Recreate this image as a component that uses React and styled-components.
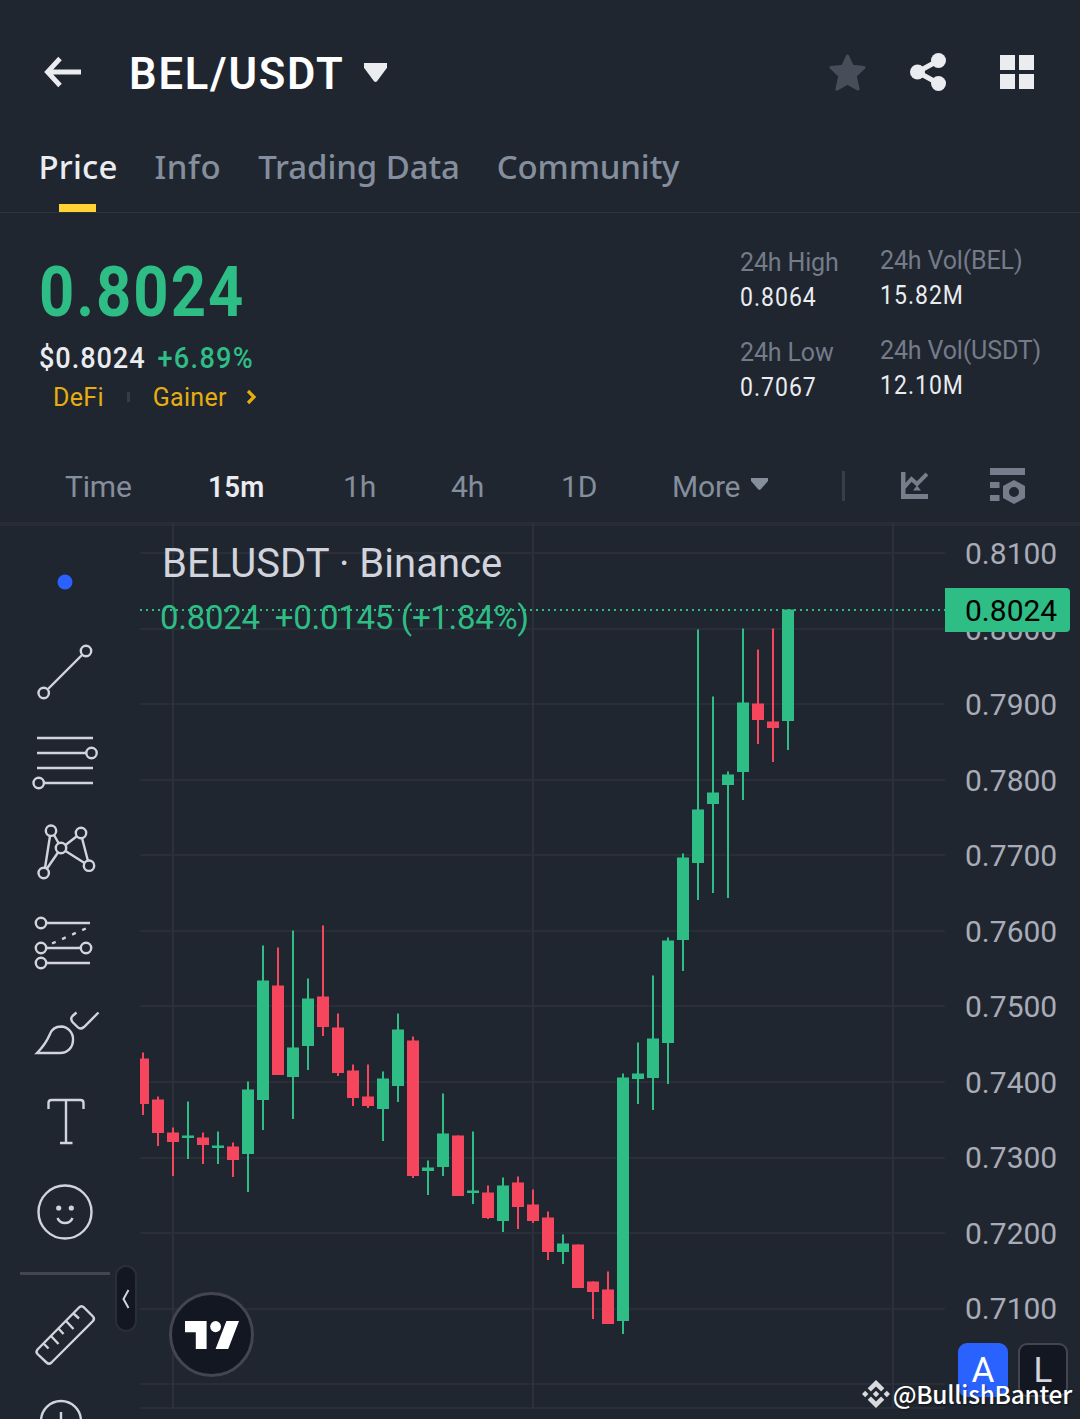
import React from 'react';
import styled, { createGlobalStyle } from 'styled-components';

const GREEN = '#2ebd85';
const RED = '#f6465d';
const LIGHT = '#eaecef';
const MUTED = '#848e9c';
const GOLD = '#e6ae10';

const TABS = [
  { label: 'Price', spacing: 0.2, active: true },
  { label: 'Info', spacing: 0.6 },
  { label: 'Trading Data', spacing: -0.1 },
  { label: 'Community', spacing: -0.15 },
];

const STATS = [
  { label: '24h High', value: '0.8064' },
  { label: '24h Vol(BEL)', value: '15.82M' },
  { label: '24h Low', value: '0.7067' },
  { label: '24h Vol(USDT)', value: '12.10M' },
];

const AXIS = [
  '0.8100',
  '0.8000',
  '0.7900',
  '0.7800',
  '0.7700',
  '0.7600',
  '0.7500',
  '0.7400',
  '0.7300',
  '0.7200',
  '0.7100',
];

// [up, wick top, body top, body bottom, wick bottom], one every 15px
const CANDLES = [
  [0, 1052.5, 1058.5, 1104, 1115],
  [0, 1096.5, 1099.5, 1133, 1146],
  [0, 1127.5, 1132.5, 1142, 1176],
  [1, 1101.5, 1135.5, 1138, 1159],
  [0, 1132.5, 1137.5, 1145, 1164],
  [1, 1131.5, 1145.5, 1148, 1164],
  [0, 1142.5, 1146.5, 1160, 1177],
  [1, 1081.5, 1089.5, 1154, 1192],
  [1, 945.5, 980.5, 1100, 1130],
  [0, 947.5, 985.5, 1075, 1075],
  [1, 930.5, 1047.5, 1077, 1119],
  [1, 978.5, 998.5, 1046, 1070],
  [0, 925.5, 996.5, 1027, 1036],
  [0, 1013.5, 1027.5, 1073, 1076],
  [0, 1064.5, 1070.5, 1098, 1106],
  [0, 1064.5, 1096.5, 1106, 1108],
  [1, 1071.5, 1078.5, 1109, 1141],
  [1, 1013.5, 1029.5, 1086, 1102],
  [0, 1036.5, 1040.5, 1176, 1178],
  [1, 1160.5, 1167.5, 1171, 1195],
  [1, 1093.5, 1133.5, 1167, 1176],
  [0, 1135.5, 1135.5, 1196, 1196],
  [1, 1131.5, 1190.5, 1193, 1204],
  [0, 1185.5, 1192.5, 1218, 1219],
  [1, 1177.5, 1185.5, 1221, 1232],
  [0, 1176.5, 1182.5, 1207, 1229],
  [0, 1189.5, 1204.5, 1221, 1223],
  [0, 1211.5, 1217.5, 1252, 1260],
  [1, 1234.5, 1243.5, 1252, 1264],
  [0, 1244.5, 1244.5, 1288, 1288],
  [0, 1281.5, 1281.5, 1292, 1319],
  [0, 1271.5, 1289.5, 1324, 1324],
  [1, 1073.5, 1077.5, 1321, 1334],
  [1, 1042.5, 1073.5, 1079, 1104],
  [1, 975.5, 1038.5, 1078, 1110],
  [1, 937.5, 940.5, 1043, 1084],
  [1, 853.5, 857.5, 940, 971],
  [1, 629.5, 809.5, 863, 900],
  [1, 696.5, 792.5, 804, 893],
  [1, 771.5, 774.5, 785, 898],
  [1, 628.5, 702.5, 772, 800],
  [0, 649.5, 703.5, 720, 744],
  [0, 628.5, 721.5, 728, 762],
  [1, 609.5, 609.5, 721, 750],
];

const GRID_Y = [552, 628, 703, 779, 854, 930, 1005, 1081, 1157, 1232, 1308, 1383, 1407];
const GRID_X = [172, 532, 892];

const Caret = ({ width, height, color }) => (
  <svg width={width} height={height} viewBox="0 0 23 18.5" preserveAspectRatio="none">
    <path d="M0 0h23v4.6L13 17.7q-1.500 1.500-3 0L0 4.600z" fill={color} />
  </svg>
);

const Chart = () => (
  <PlotSvg viewBox="140 522 805 897">
    {GRID_Y.map(y => (
      <rect key={y} x="140" y={y} width="805" height="2" fill="#292e38" />
    ))}
    {GRID_X.map(x => (
      <rect key={x} x={x} y="522" width="2" height="886" fill="#2b303a" />
    ))}
    {CANDLES.map(([up, high, top, bottom, low], i) => {
      const x = 143 + i * 15;
      return (
        <g key={x} fill={up ? GREEN : RED}>
          <rect x={x - 1} y={high} width="2" height={low - high} />
          <rect x={x - 6} y={top} width="12" height={bottom - top} />
        </g>
      );
    })}
    <path d="M140 610H945" stroke={GREEN} strokeWidth="2" strokeDasharray="2 4" />
  </PlotSvg>
);

const App = () => (
  <Page>
    <GlobalStyle />
    <Header>
      <BackIcon width="38" height="32" viewBox="0 0 38 32">
        <path d="M16 2.500 3.500 16 16 29.500M4 16h33" />
      </BackIcon>
      <Title>BEL/USDT</Title>
      <Caret width={23} height={19} color={LIGHT} />
      <Actions>
        <svg width="38" height="38" viewBox="0 0 38 38">
          <path
            d="M19.500 3l4.700 10.200 11.800 1.200-8.800 8.400 2.900 13.300L19.500 30.300 8.900 36.100l2.900-13.300L3 14.400l11.800-1.200z"
            fill="#474d59"
            stroke="#474d59"
            strokeWidth="3"
            strokeLinejoin="round"
          />
        </svg>
        <svg width="36" height="38" viewBox="0 0 36 38">
          <path d="M28.500 7.500 7.500 19l21 11.500" fill="none" stroke={LIGHT} strokeWidth="5" />
          <circle cx="28.500" cy="7.500" r="7.500" fill={LIGHT} />
          <circle cx="7.500" cy="19" r="7.500" fill={LIGHT} />
          <circle cx="28.500" cy="30.500" r="7.500" fill={LIGHT} />
        </svg>
        <svg width="34" height="34" viewBox="0 0 34 34">
          <path d="M0 0h15v15H0zM19 0h15v15H19zM0 19h15v15H0zM19 19h15v15H19z" fill={LIGHT} />
        </svg>
      </Actions>
    </Header>

    <Tabs>
      {TABS.map(tab => (
        <Tab key={tab.label} $active={tab.active} $spacing={tab.spacing}>
          {tab.label}
        </Tab>
      ))}
    </Tabs>

    <Summary>
      <div>
        <Price>0.8024</Price>
        <Change>
          <span>$0.8024</span>
          <Percent>+6.89%</Percent>
        </Change>
        <Tags>
          <Tag>DeFi</Tag>
          <TagDivider />
          <Tag>Gainer</Tag>
          <TagArrow width="11" height="16" viewBox="0 0 11 16">
            <path d="M2 2l6 6-6 6" fill="none" stroke={GOLD} strokeWidth="3.200" />
          </TagArrow>
        </Tags>
      </div>
      <Stats>
        {STATS.map((stat, i) => (
          <Stat key={stat.label} $lifted={i % 2 === 1}>
            <StatLabel>{stat.label}</StatLabel>
            <StatValue>{stat.value}</StatValue>
          </Stat>
        ))}
      </Stats>
    </Summary>

    <Intervals>
      <Interval>Time</Interval>
      <Interval $active>15m</Interval>
      <Interval>1h</Interval>
      <Interval>4h</Interval>
      <Interval>1D</Interval>
      <Interval>
        More
        <MoreCaret>
          <Caret width={17} height={12} color={MUTED} />
        </MoreCaret>
      </Interval>
      <IntervalDivider />
      <svg width="27" height="28" viewBox="0 0 27 28">
        <path d="M0 0h4.500v22H27v5H0z" fill="#787d8b" />
        <path d="M3 15.500l7.500-8.500 5.500 5L26 2" fill="none" stroke="#787d8b" strokeWidth="4" />
        <path d="M12 18.500h8l-4-5z" fill="#787d8b" />
      </svg>
      <svg width="35" height="37" viewBox="0 0 35 37">
        <path d="M0 0h35v7H0zM0 14h9.500v6H0zM0 27h9.500v6H0z" fill="#787d8b" />
        <path
          d="M24 12l11 6v12l-11 6-11-6V18zM24 19a5 5 0 1 0 0 10 5 5 0 1 0 0-10z"
          fill="#787d8b"
          fillRule="evenodd"
        />
      </svg>
    </Intervals>

    <ChartArea>
      <Toolbar>
        <Tool viewBox="0 0 130 90">
          <circle cx="65" cy="45" r="7.500" fill="#2962ff" stroke="none" />
        </Tool>
        <Tool viewBox="0 0 130 90">
          <path d="M48 62 82 28" />
          <circle cx="86" cy="24" r="5.200" />
          <circle cx="43.700" cy="66" r="5.200" />
        </Tool>
        <Tool viewBox="0 0 130 90">
          <path d="M37 21h56M37 36h49M37 51h56M44 66h49" />
          <circle cx="91.500" cy="36" r="5.200" />
          <circle cx="38.700" cy="66" r="5.200" />
        </Tool>
        <Tool viewBox="0 0 130 90">
          <path d="M50 29 45 61M54 28l4.500 8M47 61.500 58 45.500M65.500 38 76.500 29.500M82 31l6 23M65.500 44 84.500 56" />
          <circle cx="51" cy="23.700" r="5.200" />
          <circle cx="81" cy="26" r="5.200" />
          <circle cx="61" cy="41" r="5.200" />
          <circle cx="89" cy="58.700" r="5.200" />
          <circle cx="43.700" cy="66" r="5.200" />
        </Tool>
        <Tool viewBox="0 0 130 90">
          <path d="M46 26h44M46 51h35M46 66h44" />
          <path d="M52 46.500 87 31" strokeDasharray="4 7" />
          <circle cx="41" cy="26" r="5.200" />
          <circle cx="41" cy="51" r="5.200" />
          <circle cx="86" cy="51" r="5.200" />
          <circle cx="41" cy="66" r="5.200" />
        </Tool>
        <Tool viewBox="0 0 130 90">
          <path d="M37 66C43 60 47 54 50 47 52 42 55 39.500 61 39.500a12.500 12.500 0 0 1 12 13.500c0 7-5 13-13 13z" />
          <path d="M76.500 25.500l-4 3.500q-2.500 2.500 0 6l5 5q3 3 6.500 0l14.500-14.500" />
        </Tool>
        <Tool viewBox="0 0 130 90">
          <path d="M48.500 32v-6q0-3 3-3h29q3 0 3 3v6M66 23v43M60 66h12.500" />
        </Tool>
        <Tool viewBox="0 0 130 90">
          <circle cx="65" cy="45" r="26.500" />
          <path d="M57.500 51q2 5 7.500 5t7.500-5" />
          <circle cx="58.700" cy="41" r="2.600" fill="#d1d4dc" stroke="none" />
          <circle cx="71.300" cy="41" r="2.600" fill="#d1d4dc" stroke="none" />
        </Tool>
        <ToolDivider />
        <Tool viewBox="0 0 130 90">
          <path d="M37.500 59.500 79 17.500q2.500-2.300 5 0l9 9q2 2 0 4.500L51.500 72.500q-2.500 2.300-5 0l-9-8.500q-2-2 0-4.500z" />
          <path d="M43.500 53.500l5 5M51 46l7.500 8M58.500 38.500l5 5.500M66 31l7.500 8M73.500 23.500l5.500 5" />
        </Tool>
        <Tool viewBox="0 0 130 90">
          <circle cx="61" cy="41" r="20" />
          <path d="M61 32v18M52 41h18" />
        </Tool>
        <Handle>
          <svg width="8" height="20" viewBox="0 0 8 20">
            <path d="M6.500 1 1.500 10l5 9" fill="none" stroke="#d1d4dc" strokeWidth="2" />
          </svg>
        </Handle>
      </Toolbar>
      <Plot>
        <Chart />
        <Legend>
          <Symbol>BELUSDT · Binance</Symbol>
          <Quote>
            <span>0.8024</span>
            <span>+0.0145 (+1.84%)</span>
          </Quote>
        </Legend>
        <TradingBadge>
          <svg width="54" height="28" viewBox="2 6 30 15" preserveAspectRatio="none">
            <path d="M14 6H2v6h6v9h6V6zM26 21h-7l6-15h7l-6 15z" fill="#fff" />
            <circle cx="19" cy="9" r="3" fill="#fff" />
          </svg>
        </TradingBadge>
      </Plot>
      <Axis>
        {AXIS.map(price => (
          <AxisLabel key={price}>{price}</AxisLabel>
        ))}
        <PriceTag>0.8024</PriceTag>
        <ScaleButtons>
          <ScaleButton $active>A</ScaleButton>
          <ScaleButton>L</ScaleButton>
        </ScaleButtons>
      </Axis>
    </ChartArea>

    <Watermark>
      <svg width="28" height="28" viewBox="0 0 28 28">
        <path
          d="M14 0l8.300 8.300-3.200 3.200L14 6.400 8.900 11.500 5.700 8.300zM14 28l8.300-8.300-3.200-3.200-5.100 5.100-5.100-5.100-3.200 3.200zM3.200 10.800 6.400 14l-3.200 3.200L0 14zM24.800 10.800 28 14l-3.200 3.200-3.200-3.200zM14 10.800l3.200 3.200-3.200 3.200-3.200-3.200z"
          fill="#d9dadd"
        />
      </svg>
      <span>@BullishBanter</span>
    </Watermark>
  </Page>
);

const GlobalStyle = createGlobalStyle`
  body {
    margin: 0;
    background: #202630;
  }

  * {
    box-sizing: border-box;
  }

  svg {
    display: block;
    flex: none;
  }
`;

const Page = styled.div`
  position: relative;
  display: flex;
  flex-direction: column;
  width: 1080px;
  height: 1419px;
  overflow: hidden;
  background: #202630;
  color: ${LIGHT};
  font-family: Roboto, sans-serif;
  white-space: nowrap;
`;

const Header = styled.header`
  display: flex;
  align-items: center;
  height: 144px;
  padding: 0 46px 0 44px;
`;

const BackIcon = styled.svg`
  fill: none;
  stroke: ${LIGHT};
  stroke-width: 4.8;
`;

const Title = styled.h1`
  width: 235px;
  margin: 0 0 0 47px;
  padding-top: 5px;
  color: #fff;
  font-size: 43.5px;
  font-weight: 600;
  line-height: 60px;
  letter-spacing: 1.8px;
`;

const Actions = styled.div`
  display: flex;
  align-items: center;
  margin-left: auto;

  svg + svg {
    margin-left: 44px;
  }

  svg + svg + svg {
    margin-left: 54px;
  }
`;

const Tabs = styled.nav`
  display: flex;
  gap: 37px;
  height: 69px;
  padding-left: 38.4px;
  border-bottom: 1px solid #2d333d;
`;

const Tab = styled.div`
  display: flex;
  flex-direction: column;
  align-items: center;
  justify-content: space-between;
  color: ${props => (props.$active ? LIGHT : MUTED)};
  font-family: 'Noto Sans', sans-serif;
  font-size: 33px;
  font-weight: 500;
  line-height: 45px;
  letter-spacing: ${props => props.$spacing}px;

  &::after {
    content: '';
    width: 37px;
    height: 8px;
    margin-right: 1px;
    background: ${props => (props.$active ? '#fcd535' : 'transparent')};
  }
`;

const Summary = styled.section`
  display: flex;
  justify-content: space-between;
  height: 237px;
  padding: 32px 0 0 39px;
`;

const Price = styled.div`
  width: 251px;
  padding-top: 2px;
  color: ${GREEN};
  font-size: 70px;
  font-weight: 700;
  line-height: 90px;
  letter-spacing: 2.2px;
  transform: scaleX(0.88);
  transform-origin: left;
`;

const Change = styled.div`
  display: flex;
  gap: 13px;
  margin-bottom: -2px;
  font-size: 29.5px;
  font-weight: 500;
  line-height: 42px;
  letter-spacing: 1px;
  transform: scaleX(0.92);
  transform-origin: left;
`;

const Percent = styled.span`
  color: ${GREEN};
  letter-spacing: 1.4px;
`;

const Tags = styled.div`
  display: flex;
  align-items: center;
  padding-left: 14px;
  color: ${GOLD};
  font-size: 25px;
  line-height: 38px;
`;

const Tag = styled.span`
  padding-top: 2px;
  letter-spacing: 0.3px;
`;

const TagDivider = styled.i`
  width: 3px;
  height: 10px;
  margin: 0 23px;
  background: #363c47;
`;

const TagArrow = styled.svg`
  margin-left: 19px;
`;

const Stats = styled.div`
  display: grid;
  grid-template-columns: 140px 200px;
  grid-auto-rows: 90px;
`;

const Stat = styled.div`
  padding-top: ${props => (props.$lifted ? 0 : 2)}px;
`;

const StatLabel = styled.div`
  color: #747b89;
  font-size: 25px;
  line-height: 32px;
  letter-spacing: -0.15px;
`;

const StatValue = styled.div`
  padding-top: 2px;
  font-size: 25px;
  line-height: 34px;
  letter-spacing: 1.1px;
  transform: scaleX(0.92);
  transform-origin: left;
`;

const Intervals = styled.div`
  display: grid;
  grid-template-columns: 143px 135px 108px 110px 111px 170px 59px 89px 35px;
  align-items: center;
  height: 76px;
  padding-left: 65px;
  border-bottom: 4px solid #272c35;
`;

const Interval = styled.div`
  display: flex;
  align-items: center;
  gap: 11px;
  padding-top: 2px;
  color: ${props => (props.$active ? LIGHT : MUTED)};
  font-size: 30px;
  font-weight: ${props => (props.$active ? 600 : 400)};
  line-height: 40px;
  letter-spacing: ${props => (props.$active ? 0.4 : -0.2)}px;
  transform: ${props => (props.$active ? 'scaleX(0.92)' : 'none')};
  transform-origin: left;
`;

const MoreCaret = styled.span`
  padding-bottom: 6px;
`;

const IntervalDivider = styled.i`
  width: 3px;
  height: 30px;
  background: #383e49;
`;

const ChartArea = styled.main`
  display: flex;
  height: 897px;
  margin-top: -4px;
`;

const Toolbar = styled.aside`
  position: relative;
  width: 140px;
  padding-top: 15px;
`;

const Tool = styled.svg`
  width: 130px;
  height: 90px;
  fill: none;
  stroke: #d1d4dc;
  stroke-width: 2.4;
`;

const ToolDivider = styled.hr`
  width: 90px;
  height: 3px;
  margin: 15px 0 15px 20px;
  border: 0;
  background: #434651;
`;

const Handle = styled.button`
  position: absolute;
  top: 743px;
  left: 115px;
  display: flex;
  align-items: center;
  justify-content: center;
  width: 22px;
  height: 67px;
  padding: 0;
  border: 2px solid #2a2e39;
  border-radius: 11px;
  background: #131722;
`;

const Plot = styled.section`
  position: relative;
  width: 805px;
`;

const PlotSvg = styled.svg`
  width: 805px;
  height: 897px;
`;

const Legend = styled.div`
  position: absolute;
  top: 14px;
  left: 21px;
`;

const Symbol = styled.div`
  padding-left: 1px;
  color: #d1d4dc;
  font-size: 40px;
  line-height: 56px;
  letter-spacing: 0.04px;
`;

const Quote = styled.div`
  display: flex;
  gap: 15px;
  margin-left: -1px;
  color: ${GREEN};
  font-size: 33px;
  line-height: 52px;
  letter-spacing: -0.28px;
`;

const TradingBadge = styled.div`
  position: absolute;
  top: 770px;
  left: 29px;
  display: flex;
  align-items: center;
  justify-content: center;
  width: 85px;
  height: 85px;
  border: 3px solid #434651;
  border-radius: 50%;
  background: #131722;
`;

const Axis = styled.div`
  position: relative;
  width: 135px;
  margin-top: -6px;
`;

const AxisLabel = styled.div`
  height: 75.55px;
  padding-left: 20px;
  color: #a9acb6;
  font-size: 30px;
  line-height: 76.6px;
`;

const PriceTag = styled.div`
  position: absolute;
  top: 72px;
  left: 0;
  width: 125px;
  height: 44px;
  padding-left: 20px;
  border-radius: 0 4px 4px 0;
  background: ${GREEN};
  color: #000;
  font-size: 30px;
  line-height: 45px;
`;

const ScaleButtons = styled.div`
  display: flex;
  gap: 10px;
  margin-top: -4px;
  padding-left: 13px;
`;

const ScaleButton = styled.button`
  width: 50px;
  height: 54px;
  padding: 2px 0 0;
  border: 2px solid ${props => (props.$active ? '#2962ff' : '#434651')};
  border-radius: 9px;
  background: ${props => (props.$active ? '#2962ff' : '#131722')};
  color: ${props => (props.$active ? '#fff' : '#d1d4dc')};
  font-family: Roboto, sans-serif;
  font-size: 35px;
  line-height: 48px;
`;

const Watermark = styled.div`
  position: absolute;
  right: 8px;
  bottom: 9px;
  display: flex;
  align-items: center;
  gap: 3px;
  color: #fff;
  font-family: 'Noto Sans CJK SC', sans-serif;
  font-size: 24.5px;
  font-weight: 500;
  line-height: 32px;
  letter-spacing: -0.25px;
  text-shadow: 1px 1px 2px rgba(0, 0, 0, 0.5);
`;

export default App;
